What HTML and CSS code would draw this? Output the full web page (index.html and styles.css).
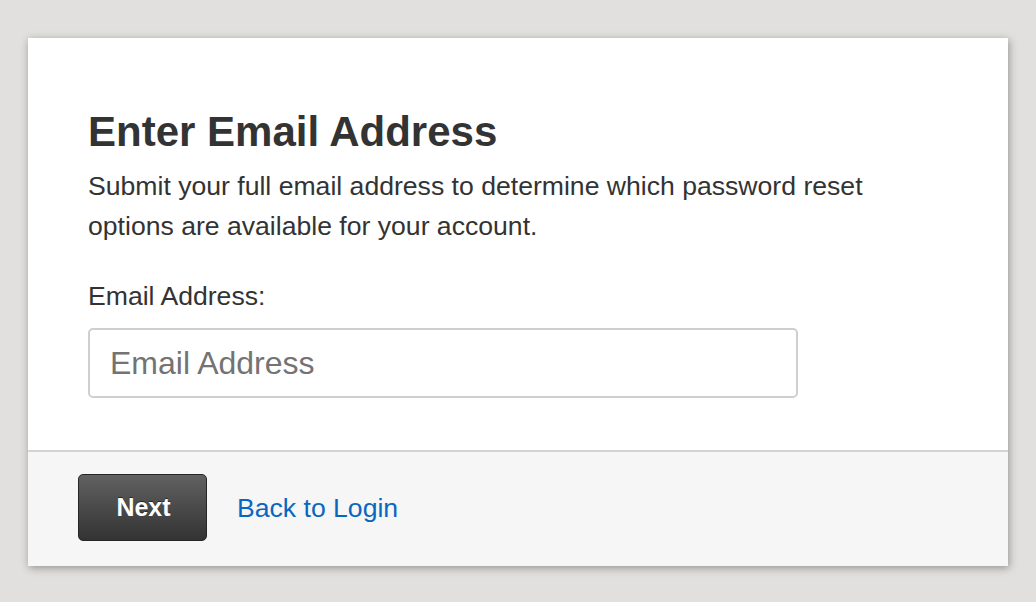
FILE: index.html
```html
<!DOCTYPE html>
<html lang="en">
<head>
<meta charset="utf-8">
<title>Enter Email Address</title>
<link rel="stylesheet" href="styles.css">
</head>
<body>
<div class="card">
  <div class="card-body">
    <h1 class="title">Enter Email Address</h1>
    <p class="desc">Submit your full email address to determine which password reset options are available for your account.</p>
    <label class="label" for="email">Email Address:</label>
    <input class="input" id="email" type="text" placeholder="Email Address">
  </div>
  <div class="card-footer">
    <button class="btn" type="button">Next</button>
    <a class="link" href="#">Back to Login</a>
  </div>
</div>
</body>
</html>
```
FILE: styles.css
```css
html, body {
  margin: 0;
  padding: 0;
}
body {
  background: #e1e0de;
  font-family: "Liberation Sans", Arial, sans-serif;
  color: #333333;
  padding-top: 38px;
  height: 602px;
  box-sizing: border-box;
  overflow: hidden;
}
.card {
  margin-left: 28px;
  width: 980px;
  background: #ffffff;
  box-shadow: 1px 2px 8px rgba(0, 0, 0, 0.35);
}
.card-body {
  padding: 70px 60px 52px;
  display: flex;
  flex-direction: column;
  align-items: flex-start;
}
.title {
  margin: 0;
  font-size: 42px;
  line-height: 48px;
  font-weight: bold;
  color: #333333;
}
.desc {
  margin: 10px 0 0;
  font-size: 26.6px;
  line-height: 40px;
  width: 820px;
}
.label {
  margin-top: 35px;
  font-size: 26.6px;
  line-height: 30px;
}
.input {
  margin: 17px 0 0;
  box-sizing: border-box;
  width: 710px;
  height: 70px;
  border: 2px solid #cfcfcf;
  border-radius: 5px;
  padding: 0 20px;
  font-family: "Liberation Sans", Arial, sans-serif;
  font-size: 32px;
  color: #333333;
  background: #ffffff;
  outline: none;
}
.input::placeholder {
  color: #737373;
  opacity: 1;
}
.card-footer {
  background: #f6f6f6;
  border-top: 2px solid #d3d3d3;
  padding: 22px 50px 25px;
  display: flex;
  align-items: center;
  gap: 30px;
}
.btn {
  box-sizing: border-box;
  width: 129px;
  height: 67px;
  border: 1px solid #262626;
  border-radius: 5px;
  background: linear-gradient(to bottom, #616161 0%, #4a4a4a 50%, #333333 100%);
  color: #ffffff;
  font-family: "Liberation Sans", Arial, sans-serif;
  font-size: 25px;
  font-weight: bold;
  text-shadow: 0 -1px 0 rgba(0, 0, 0, 0.5);
  padding: 0 0 0 2px;
  cursor: pointer;
}
.link {
  font-size: 26.6px;
  color: #0a67c0;
  text-decoration: none;
  margin-top: 2px;
}
```
